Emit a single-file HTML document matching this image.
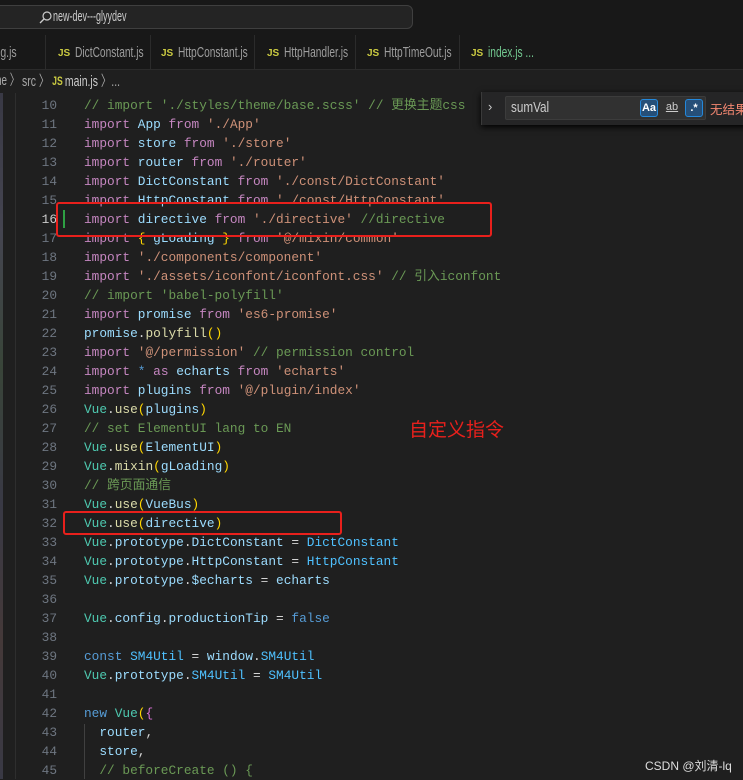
<!DOCTYPE html>
<html><head><meta charset="utf-8"><style>
*{margin:0;padding:0;box-sizing:border-box}
body{width:743px;height:779px;overflow:hidden;background:#1f1f1f;position:relative;font-family:"Liberation Sans","Noto Sans CJK SC",sans-serif;}
.title{position:absolute;left:0;top:0;width:743px;height:35px;background:#181818;}
.search{position:absolute;left:-10px;top:5px;width:423px;height:24px;border:1px solid #3f3f3f;border-radius:6px;background:#242424;color:#ccc;font-size:14.5px;line-height:22px}
.nar{display:inline-block;transform:scaleX(0.68);transform-origin:0 50%;white-space:nowrap}
.tabs{position:absolute;left:0;top:35px;width:743px;height:35px;background:#181818;border-bottom:1px solid #2b2b2b}
.tab{position:absolute;top:0;height:35px;line-height:35px;font-size:15px;color:#9d9d9d;border-right:1px solid #2b2b2b;white-space:nowrap}
.js{color:#cbcb41;font-weight:bold;font-size:10px;margin-right:5px;vertical-align:1px}
.bc{position:absolute;left:0;top:70px;width:743px;height:23px;background:#1f1f1f;font-size:14.5px;color:#a9a9a9;line-height:22px}
.strip{position:absolute;left:0;top:93px;width:3px;height:686px;background:linear-gradient(#445 0,#556 20%,#454 40%,#445 60%,#544 80%,#445 100%);opacity:.7}
.div{position:absolute;left:15px;top:93px;width:1px;height:686px;background:#2e2e2e}
.code{position:absolute;left:0;top:77px;font-family:"Liberation Mono","Noto Sans CJK SC",monospace;font-size:12.8px;line-height:19px;white-space:pre;color:#9cdcfe}
.ln{display:inline-block;width:57px;text-align:right;color:#6e7681;margin-right:27px}
.k{color:#c586c0}.v{color:#9cdcfe}.s{color:#ce9178}.c{color:#6a9955}.t{color:#4ec9b0}.f{color:#dcdcaa}.p{color:#ffd700}.q{color:#da70d6}.b{color:#569cd6}.w{color:#d4d4d4}.n{color:#4fc1ff}
.box{position:absolute;border:2px solid #e8201c;border-radius:3px}
.find{position:absolute;left:481px;top:92px;width:270px;height:33px;background:#252526;box-shadow:0 2px 6px #000;border-left:1px solid #3a3a3a}
.fin{position:absolute;left:23px;top:4px;width:201px;height:24px;background:#313131;border:1px solid #3c3c3c;border-radius:2px;color:#ccc;font-size:15px;line-height:22px;padding-left:5px}
.opt{position:absolute;top:2px;width:18px;height:18px;border-radius:3px;font-size:11px;color:#fff;text-align:center;line-height:16px;font-weight:bold}
</style></head><body>
<div class="title"><div class="search"><svg style="position:absolute;left:48px;top:5px" width="13" height="13" viewBox="0 0 13 13"><circle cx="8" cy="5" r="4" fill="none" stroke="#ccc" stroke-width="1.2"/><path d="M5 8L1 12" stroke="#ccc" stroke-width="1.3"/></svg><span class="nar" style="position:absolute;left:62px;top:0;transform:scaleX(0.62)">new-dev---glyydev</span></div></div>
<div class="tabs">
<div class="tab" style="left:0;width:46px;padding-left:0"><span class="nar" style="margin-left:-2px;transform:scaleX(0.7)">ig.js</span></div>
<div class="tab" style="left:46px;width:105px;padding-left:12px"><span class="js">JS</span><span class="nar">DictConstant.js</span></div>
<div class="tab" style="left:151px;width:104px;padding-left:10px"><span class="js">JS</span><span class="nar">HttpConstant.js</span></div>
<div class="tab" style="left:255px;width:101px;padding-left:12px"><span class="js">JS</span><span class="nar">HttpHandler.js</span></div>
<div class="tab" style="left:356px;width:104px;padding-left:11px"><span class="js">JS</span><span class="nar">HttpTimeOut.js</span></div>
<div class="tab" style="left:460px;width:283px;padding-left:11px;color:#73c991;border:none"><span class="js">JS</span><span class="nar">index.js ...</span></div>
</div>
<div class="bc"><span class="nar" style="position:absolute;left:-4px">ne 〉</span><span class="nar" style="position:absolute;left:22px;transform:scaleX(0.72)">src 〉<span class="js" style="margin-left:4px;margin-right:3px;font-size:12px">JS</span><span style="color:#ccc">main.js</span> 〉...</span></div>
<div class="strip"></div><div class="div"></div>
<div class="code"><span class="ln"> </span><span class="w"> </span>
<span class="ln">10</span><span class="c">// import './styles/theme/base.scss' // 更换主题css</span>
<span class="ln">11</span><span class="k">import</span> <span class="v">App</span> <span class="k">from</span> <span class="s">'./App'</span>
<span class="ln">12</span><span class="k">import</span> <span class="v">store</span> <span class="k">from</span> <span class="s">'./store'</span>
<span class="ln">13</span><span class="k">import</span> <span class="v">router</span> <span class="k">from</span> <span class="s">'./router'</span>
<span class="ln">14</span><span class="k">import</span> <span class="v">DictConstant</span> <span class="k">from</span> <span class="s">'./const/DictConstant'</span>
<span class="ln">15</span><span class="k">import</span> <span class="v">HttpConstant</span> <span class="k">from</span> <span class="s">'./const/HttpConstant'</span>
<span class="ln" style="color:#ccc">16</span><span class="k">import</span> <span class="v">directive</span> <span class="k">from</span> <span class="s">'./directive'</span> <span class="c">//directive</span>
<span class="ln">17</span><span class="k">import</span> <span class="p">{</span> <span class="v">gLoading</span> <span class="p">}</span> <span class="k">from</span> <span class="s">'@/mixin/common'</span>
<span class="ln">18</span><span class="k">import</span> <span class="s">'./components/component'</span>
<span class="ln">19</span><span class="k">import</span> <span class="s">'./assets/iconfont/iconfont.css'</span> <span class="c">// 引入iconfont</span>
<span class="ln">20</span><span class="c">// import 'babel-polyfill'</span>
<span class="ln">21</span><span class="k">import</span> <span class="v">promise</span> <span class="k">from</span> <span class="s">'es6-promise'</span>
<span class="ln">22</span><span class="v">promise</span><span class="w">.</span><span class="f">polyfill</span><span class="p">()</span>
<span class="ln">23</span><span class="k">import</span> <span class="s">'@/permission'</span> <span class="c">// permission control</span>
<span class="ln">24</span><span class="k">import</span> <span class="b">*</span> <span class="k">as</span> <span class="v">echarts</span> <span class="k">from</span> <span class="s">'echarts'</span>
<span class="ln">25</span><span class="k">import</span> <span class="v">plugins</span> <span class="k">from</span> <span class="s">'@/plugin/index'</span>
<span class="ln">26</span><span class="t">Vue</span><span class="w">.</span><span class="f">use</span><span class="p">(</span><span class="v">plugins</span><span class="p">)</span>
<span class="ln">27</span><span class="c">// set ElementUI lang to EN</span>
<span class="ln">28</span><span class="t">Vue</span><span class="w">.</span><span class="f">use</span><span class="p">(</span><span class="v">ElementUI</span><span class="p">)</span>
<span class="ln">29</span><span class="t">Vue</span><span class="w">.</span><span class="f">mixin</span><span class="p">(</span><span class="v">gLoading</span><span class="p">)</span>
<span class="ln">30</span><span class="c">// 跨页面通信</span>
<span class="ln">31</span><span class="t">Vue</span><span class="w">.</span><span class="f">use</span><span class="p">(</span><span class="v">VueBus</span><span class="p">)</span>
<span class="ln">32</span><span class="t">Vue</span><span class="w">.</span><span class="f">use</span><span class="p">(</span><span class="v">directive</span><span class="p">)</span>
<span class="ln">33</span><span class="t">Vue</span><span class="w">.</span><span class="v">prototype</span><span class="w">.</span><span class="v">DictConstant</span> <span class="w">=</span> <span class="n">DictConstant</span>
<span class="ln">34</span><span class="t">Vue</span><span class="w">.</span><span class="v">prototype</span><span class="w">.</span><span class="v">HttpConstant</span> <span class="w">=</span> <span class="n">HttpConstant</span>
<span class="ln">35</span><span class="t">Vue</span><span class="w">.</span><span class="v">prototype</span><span class="w">.</span><span class="v">$echarts</span> <span class="w">=</span> <span class="v">echarts</span>
<span class="ln">36</span>
<span class="ln">37</span><span class="t">Vue</span><span class="w">.</span><span class="v">config</span><span class="w">.</span><span class="v">productionTip</span> <span class="w">=</span> <span class="b">false</span>
<span class="ln">38</span>
<span class="ln">39</span><span class="b">const</span> <span class="n">SM4Util</span> <span class="w">=</span> <span class="v">window</span><span class="w">.</span><span class="n">SM4Util</span>
<span class="ln">40</span><span class="t">Vue</span><span class="w">.</span><span class="v">prototype</span><span class="w">.</span><span class="n">SM4Util</span> <span class="w">=</span> <span class="n">SM4Util</span>
<span class="ln">41</span>
<span class="ln">42</span><span class="b">new</span> <span class="t">Vue</span><span class="p">(</span><span class="q">{</span>
<span class="ln">43</span>  <span class="v">router</span><span class="w">,</span>
<span class="ln">44</span>  <span class="v">store</span><span class="w">,</span>
<span class="ln">45</span>  <span class="c">// beforeCreate () {</span>
</div>
<div style="position:absolute;left:63px;top:210px;width:2px;height:18px;background:#2ea043"></div>
<div style="position:absolute;left:84px;top:724px;width:1px;height:55px;background:#404040"></div>
<div class="box" style="left:56px;top:202px;width:436px;height:35px"></div>
<div class="box" style="left:63px;top:511px;width:279px;height:24px"></div>
<div style="position:absolute;left:409px;top:415px;color:#e8201c;font-size:19px;font-family:'Noto Sans CJK SC',sans-serif">自定义指令</div>
<div class="find"><span style="position:absolute;left:6px;top:7px;color:#ccc;font-size:13px">›</span>
<div class="fin"><span class="nar" style="transform:scaleX(0.78)">sumVal</span>
<div class="opt" style="left:134px;background:#264f78;border:1px solid #2488db">Aa</div>
<div class="opt" style="left:157px;color:#ccc;text-decoration:underline;font-weight:normal">ab</div>
<div class="opt" style="left:179px;background:#264f78;border:1px solid #2488db">.*</div></div>
<span style="position:absolute;left:228px;top:7px;color:#f48771;font-size:12.5px;white-space:nowrap">无结果</span></div>
<div style="position:absolute;left:645px;top:757px;color:#ddd;font-size:12px">CSDN @刘清-lq</div>
</body></html>
